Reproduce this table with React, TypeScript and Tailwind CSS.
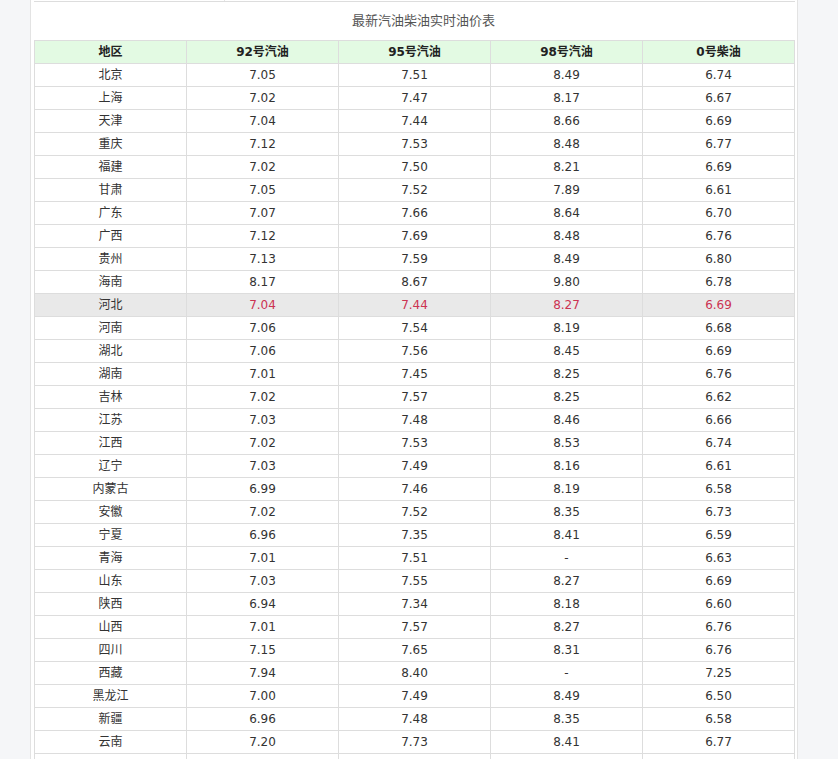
import React from "react";

type Row = [string, string, string, string, string];

const rows: Row[] = [
  ["北京", "7.05", "7.51", "8.49", "6.74"],
  ["上海", "7.02", "7.47", "8.17", "6.67"],
  ["天津", "7.04", "7.44", "8.66", "6.69"],
  ["重庆", "7.12", "7.53", "8.48", "6.77"],
  ["福建", "7.02", "7.50", "8.21", "6.69"],
  ["甘肃", "7.05", "7.52", "7.89", "6.61"],
  ["广东", "7.07", "7.66", "8.64", "6.70"],
  ["广西", "7.12", "7.69", "8.48", "6.76"],
  ["贵州", "7.13", "7.59", "8.49", "6.80"],
  ["海南", "8.17", "8.67", "9.80", "6.78"],
  ["河北", "7.04", "7.44", "8.27", "6.69"],
  ["河南", "7.06", "7.54", "8.19", "6.68"],
  ["湖北", "7.06", "7.56", "8.45", "6.69"],
  ["湖南", "7.01", "7.45", "8.25", "6.76"],
  ["吉林", "7.02", "7.57", "8.25", "6.62"],
  ["江苏", "7.03", "7.48", "8.46", "6.66"],
  ["江西", "7.02", "7.53", "8.53", "6.74"],
  ["辽宁", "7.03", "7.49", "8.16", "6.61"],
  ["内蒙古", "6.99", "7.46", "8.19", "6.58"],
  ["安徽", "7.02", "7.52", "8.35", "6.73"],
  ["宁夏", "6.96", "7.35", "8.41", "6.59"],
  ["青海", "7.01", "7.51", "-", "6.63"],
  ["山东", "7.03", "7.55", "8.27", "6.69"],
  ["陕西", "6.94", "7.34", "8.18", "6.60"],
  ["山西", "7.01", "7.57", "8.27", "6.76"],
  ["四川", "7.15", "7.65", "8.31", "6.76"],
  ["西藏", "7.94", "8.40", "-", "7.25"],
  ["黑龙江", "7.00", "7.49", "8.49", "6.50"],
  ["新疆", "6.96", "7.48", "8.35", "6.58"],
  ["云南", "7.20", "7.73", "8.41", "6.77"],
];

const headers = ["地区", "92号汽油", "95号汽油", "98号汽油", "0号柴油"];

const font = {
  fontFamily: '"DejaVu Sans", "Noto Sans CJK SC", sans-serif',
};

export default function App() {
  return (
    <div className="min-h-[759px] bg-[#f5f6f8] pl-[30px]" style={font}>
      <div className="w-[768px] min-h-[759px] border-x border-[#e3e3e3] bg-white pl-[3px] pr-[2px]">
        <div className="flex h-[2px] w-[761px] border-b border-[#dddddd]">
          <div className="h-[1px] w-[191px] border-r border-[#e5e5e5]" />
        </div>
        <div className="flex h-[38px] w-[761px] items-center justify-center pl-[18px] text-[13px] text-[#555555]">
          最新汽油柴油实时油价表
        </div>
        <div className="grid w-[761px] grid-cols-[repeat(5,152px)] border-l border-t border-[#dddddd] text-[12px] text-[#333333]">
          {headers.map((h) => (
            <div
              key={h}
              className="flex h-[23px] items-center justify-center border-b border-r border-[#dddddd] bg-[#e3fae3] font-bold text-[#222222]"
            >
              {h}
            </div>
          ))}
          {rows.map((r) => {
            const hl = r[0] === "河北";
            return r.map((c, i) => (
              <div
                key={r[0] + i}
                className={
                  hl
                    ? i === 0
                      ? "flex h-[23px] items-center justify-center border-b border-r border-[#dddddd] bg-[#e9e9e9] text-[#333333]"
                      : "flex h-[23px] items-center justify-center border-b border-r border-[#dddddd] bg-[#e9e9e9] text-[#cc3352]"
                    : "flex h-[23px] items-center justify-center border-b border-r border-[#dddddd]"
                }
              >
                {c}
              </div>
            ));
          })}
          {[0, 1, 2, 3, 4].map((i) => (
            <div key={"e" + i} className="h-[23px] border-b border-r border-[#dddddd]" />
          ))}
        </div>
      </div>
    </div>
  );
}
